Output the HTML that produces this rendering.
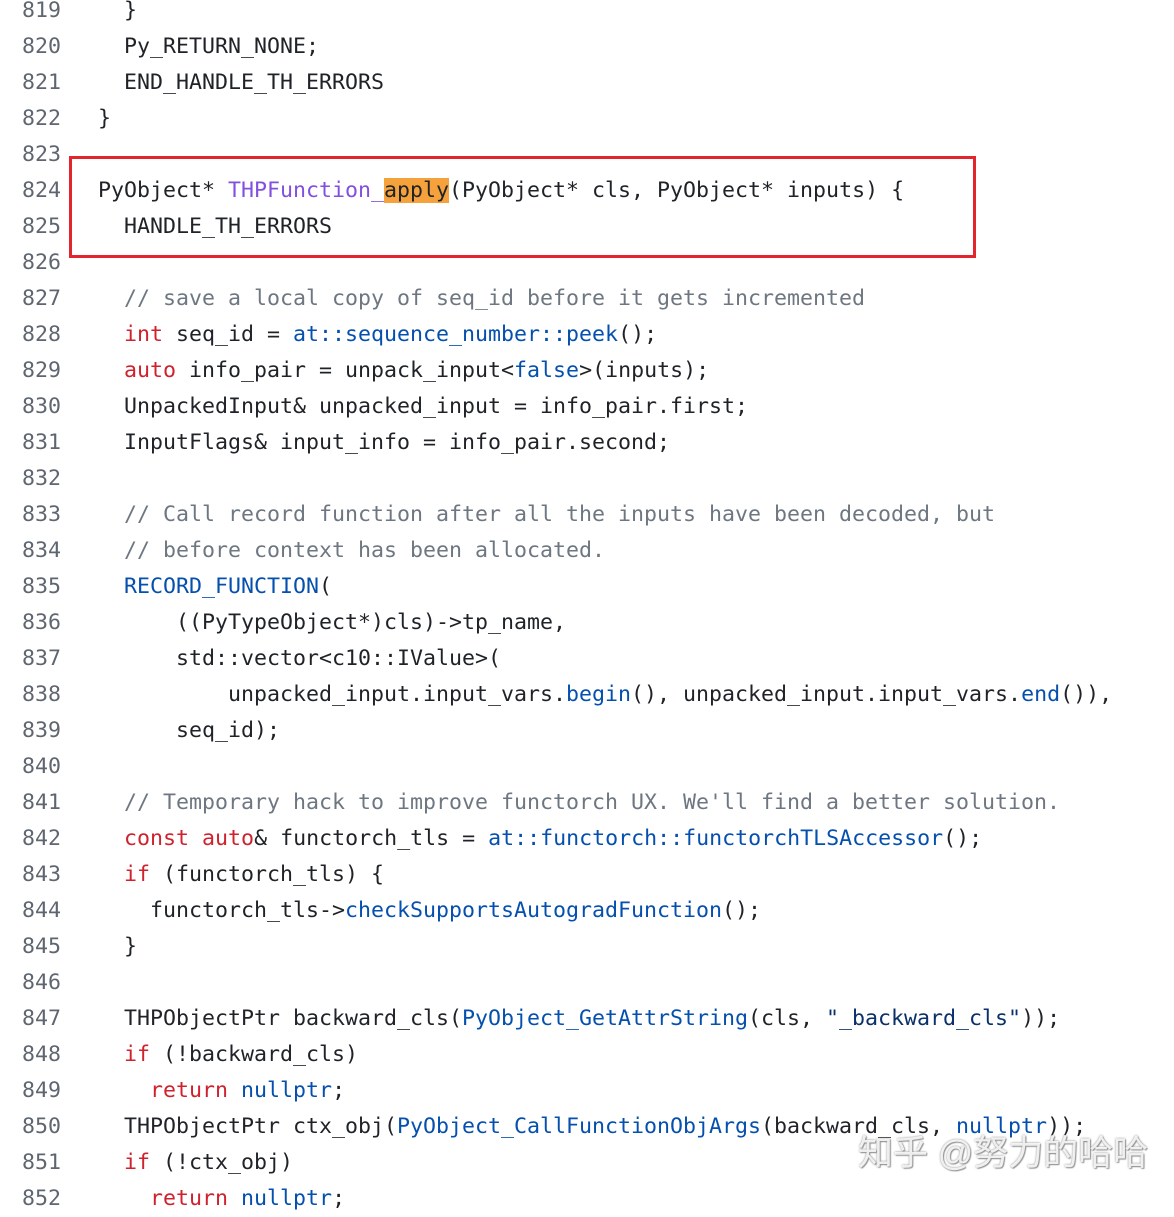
<!DOCTYPE html>
<html><head><meta charset="utf-8"><style>
body{margin:0;background:#fff;width:1174px;height:1202px;overflow:hidden;position:relative}
.c{position:absolute;left:0;top:-7px;font-family:"DejaVu Sans Mono","Liberation Mono",monospace;font-size:21.6px;line-height:36px;color:#1f2328}
.r{display:flex;height:36px;white-space:pre}
.n{width:61px;text-align:right;color:#5f6670;flex:none}
.t{margin-left:37px}
.k{color:#cf222e}.f{color:#8250df}.b{color:#0550ae}.m{color:#6e7781}.s{color:#0a3069}
.h{background:#f6a23c}
.box{position:absolute;left:69px;top:156px;width:901px;height:96px;border:3px solid #e3262e}
.wm{position:absolute;left:858px;top:1134px;font-family:"Liberation Sans","Noto Sans CJK SC",sans-serif;font-size:35px;line-height:40px;color:rgba(255,255,255,.85);text-shadow:0 0 2px #888,1px 1px 1px #999}
</style></head><body>
<div class="c">
<div class="r"><span class="n">819</span><span class="t">  }</span></div>
<div class="r"><span class="n">820</span><span class="t">  Py_RETURN_NONE;</span></div>
<div class="r"><span class="n">821</span><span class="t">  END_HANDLE_TH_ERRORS</span></div>
<div class="r"><span class="n">822</span><span class="t">}</span></div>
<div class="r"><span class="n">823</span><span class="t"></span></div>
<div class="r"><span class="n">824</span><span class="t">PyObject* <span class="f">THPFunction_</span><span class="h">apply</span>(PyObject* cls, PyObject* inputs) {</span></div>
<div class="r"><span class="n">825</span><span class="t">  HANDLE_TH_ERRORS</span></div>
<div class="r"><span class="n">826</span><span class="t"></span></div>
<div class="r"><span class="n">827</span><span class="t">  <span class="m">// save a local copy of seq_id before it gets incremented</span></span></div>
<div class="r"><span class="n">828</span><span class="t">  <span class="k">int</span> seq_id = <span class="b">at::sequence_number::peek</span>();</span></div>
<div class="r"><span class="n">829</span><span class="t">  <span class="k">auto</span> info_pair = unpack_input&lt;<span class="b">false</span>&gt;(inputs);</span></div>
<div class="r"><span class="n">830</span><span class="t">  UnpackedInput&amp; unpacked_input = info_pair.first;</span></div>
<div class="r"><span class="n">831</span><span class="t">  InputFlags&amp; input_info = info_pair.second;</span></div>
<div class="r"><span class="n">832</span><span class="t"></span></div>
<div class="r"><span class="n">833</span><span class="t">  <span class="m">// Call record function after all the inputs have been decoded, but</span></span></div>
<div class="r"><span class="n">834</span><span class="t">  <span class="m">// before context has been allocated.</span></span></div>
<div class="r"><span class="n">835</span><span class="t">  <span class="b">RECORD_FUNCTION</span>(</span></div>
<div class="r"><span class="n">836</span><span class="t">      ((PyTypeObject*)cls)-&gt;tp_name,</span></div>
<div class="r"><span class="n">837</span><span class="t">      std::vector&lt;c10::IValue&gt;(</span></div>
<div class="r"><span class="n">838</span><span class="t">          unpacked_input.input_vars.<span class="b">begin</span>(), unpacked_input.input_vars.<span class="b">end</span>()),</span></div>
<div class="r"><span class="n">839</span><span class="t">      seq_id);</span></div>
<div class="r"><span class="n">840</span><span class="t"></span></div>
<div class="r"><span class="n">841</span><span class="t">  <span class="m">// Temporary hack to improve functorch UX. We'll find a better solution.</span></span></div>
<div class="r"><span class="n">842</span><span class="t">  <span class="k">const</span> <span class="k">auto</span>&amp; functorch_tls = <span class="b">at::functorch::functorchTLSAccessor</span>();</span></div>
<div class="r"><span class="n">843</span><span class="t">  <span class="k">if</span> (functorch_tls) {</span></div>
<div class="r"><span class="n">844</span><span class="t">    functorch_tls-&gt;<span class="b">checkSupportsAutogradFunction</span>();</span></div>
<div class="r"><span class="n">845</span><span class="t">  }</span></div>
<div class="r"><span class="n">846</span><span class="t"></span></div>
<div class="r"><span class="n">847</span><span class="t">  THPObjectPtr backward_cls(<span class="b">PyObject_GetAttrString</span>(cls, <span class="s">"_backward_cls"</span>));</span></div>
<div class="r"><span class="n">848</span><span class="t">  <span class="k">if</span> (!backward_cls)</span></div>
<div class="r"><span class="n">849</span><span class="t">    <span class="k">return</span> <span class="b">nullptr</span>;</span></div>
<div class="r"><span class="n">850</span><span class="t">  THPObjectPtr ctx_obj(<span class="b">PyObject_CallFunctionObjArgs</span>(backward_cls, <span class="b">nullptr</span>));</span></div>
<div class="r"><span class="n">851</span><span class="t">  <span class="k">if</span> (!ctx_obj)</span></div>
<div class="r"><span class="n">852</span><span class="t">    <span class="k">return</span> <span class="b">nullptr</span>;</span></div>
</div>
<div class="box"></div>
<div class="wm">知乎 @努力的哈哈</div>
</body></html>
